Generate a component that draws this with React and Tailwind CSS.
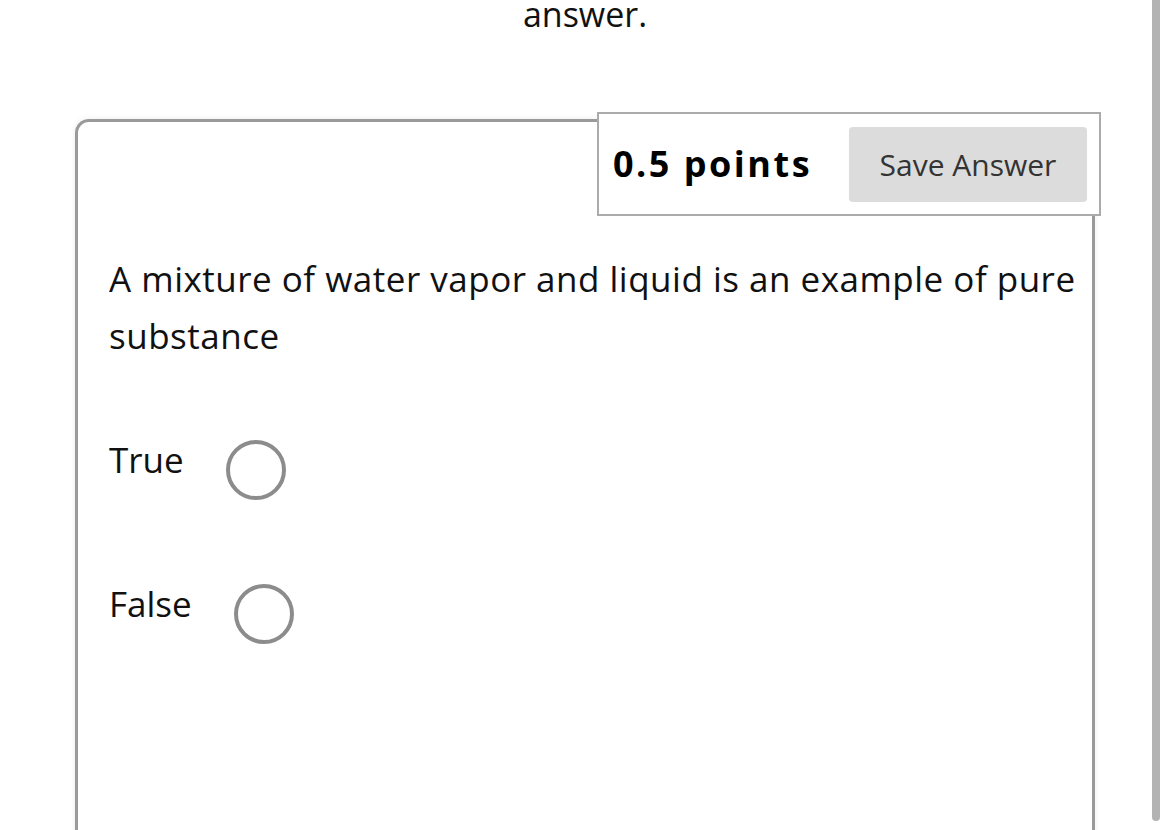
export default function App() {
  return (
    <div className="relative h-[830px] w-[1170px] overflow-hidden bg-white" style={{ fontFamily: "'Open Sans', 'Noto Sans', sans-serif" }}>
      {/* previous question tail */}
      <p className="-mt-[8px] text-center text-[34px] leading-[44px] text-[#111]">answer.</p>

      {/* question card */}
      <div className="relative ml-[75px] mt-[83px] h-[760px] w-[1020px] rounded-tl-[14px] border-l-[3px] border-r-[3px] border-t-[3px] border-[#9a9a9a] shadow-[0_0_6px_rgba(0,0,0,0.08)]">
        <div className="absolute -top-[10px] left-[519px] flex h-[104px] w-[504px] items-center justify-between border-2 border-[#ababab] bg-white pl-[14px] pr-[12px]">
          <span className="text-[36px] font-bold tracking-[2.5px] text-black">0.5 points</span>
          <button className="flex h-[75px] w-[238px] items-center justify-center rounded-[4px] bg-[#dcdcdc] text-[30px] text-[#333]">
            Save Answer
          </button>
        </div>

        <div className="pl-[31px] pr-[4px] pt-[128px]">
          <p className="text-[35px] leading-[57px] tracking-[0.5px] text-[#111]">
            A mixture of water vapor and liquid is an example of pure substance
          </p>

          <div className="mt-[70px] flex flex-col gap-[71px]">
            <label className="flex items-center gap-[42px]">
              <span className="mb-[20px] text-[35px] text-[#111]">True</span>
              <span className="h-[60px] w-[60px] rounded-full border-[4px] border-[#8c8c8c]" />
            </label>
            <label className="flex items-center gap-[42px]">
              <span className="mb-[20px] text-[35px] text-[#111]">False</span>
              <span className="h-[60px] w-[60px] rounded-full border-[4px] border-[#8c8c8c]" />
            </label>
          </div>
        </div>
      </div>

      {/* scroll indicator */}
      <div className="absolute right-[10px] top-0 h-[821px] w-[8px] rounded-b-full bg-[#b3b3b3]" />
    </div>
  );
}
